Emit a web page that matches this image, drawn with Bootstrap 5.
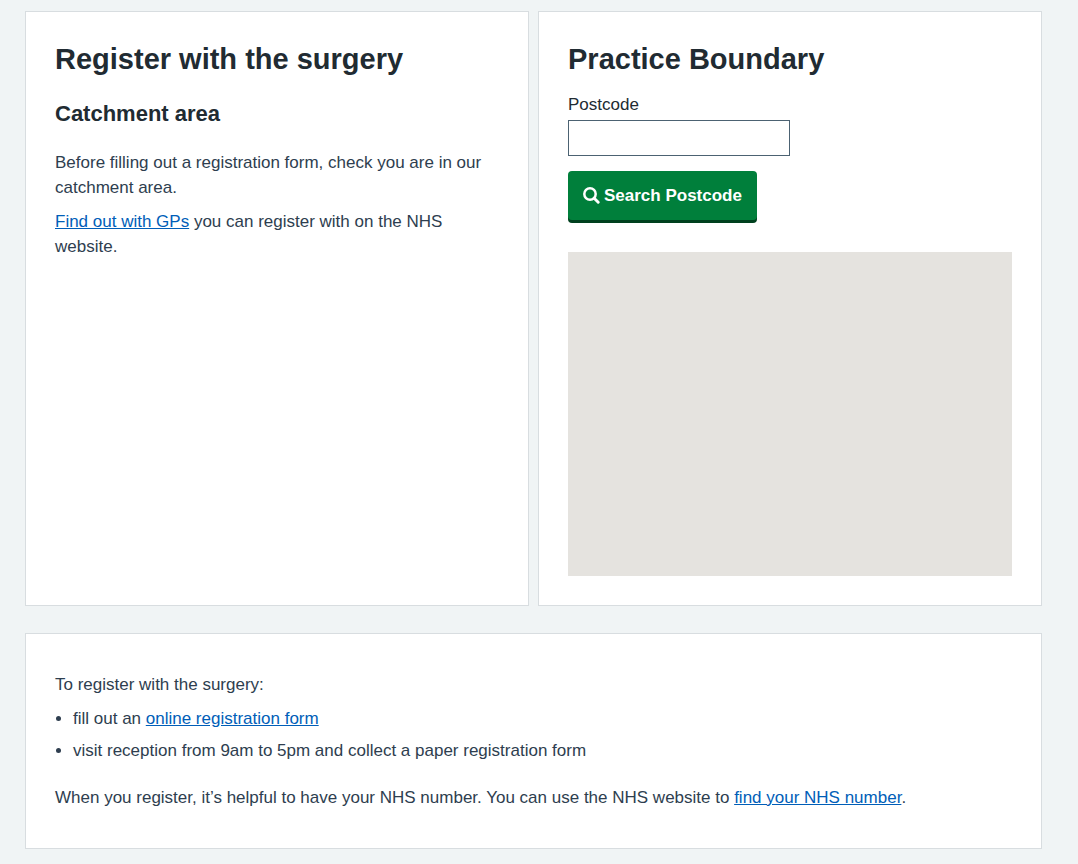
<!DOCTYPE html>
<html lang="en">
<head>
<meta charset="utf-8">
<meta name="viewport" content="width=device-width, initial-scale=1">
<title>Register with the surgery</title>
<link href="https://cdn.jsdelivr.net/npm/bootstrap@5.3.0/dist/css/bootstrap.min.css" rel="stylesheet">
<style>
  body { background: #f0f4f5; color: #212b32; font-family: "Liberation Sans", Arial, sans-serif; font-size: 17px; line-height: 25px; }
  .page { padding: 11px 36px 16px 25px; }
  .panels { gap: 9px; }
  .panel { border: 1px solid #d8dde0; border-radius: 0; color: inherit; }
  .panel .card-body { padding: 29px; }
  h2 { font-size: 29px; line-height: 36px; font-weight: 700; margin-bottom: 15px; }
  h3 { font-size: 22px; line-height: 28px; font-weight: 700; margin: 23px 0 22px; }
  p { margin-bottom: 9px; }
  p, li { color: #2e3e4f; }
  a { color: #005eb8; }
  .postcode-label { margin-bottom: 3px; }
  .postcode { width: 222px; height: 36px; border: 1px solid #4c6272; border-radius: 0; }
  .btn-search { background: #007f3b; color: #fff; font-size: 17px; font-weight: 700; line-height: 25px; border: 0; border-radius: 4px; box-shadow: 0 3px 0 #00401e; padding: 12px 15px; margin: 15px 0 32px; }
  .btn-search:hover { background: #00662f; color: #fff; }
  .map { background: #e5e3df; height: 324px; }
  .intro { margin-top: 9px; }
  .steps { padding-left: 18px; margin-bottom: 22px; }
  .steps li { margin-bottom: 7px; }
  .lower { margin-top: 27px; }
</style>
</head>
<body>
<main class="page">
  <div class="panels d-flex">
    <section class="card panel col">
      <div class="card-body">
        <h2>Register with the surgery</h2>
        <h3>Catchment area</h3>
        <p>Before filling out a registration form, check you are in our catchment area.</p>
        <p class="mb-0"><a href="#">Find out with GPs</a> you can register with on the NHS website.</p>
      </div>
    </section>
    <section class="card panel col">
      <div class="card-body">
        <h2>Practice Boundary</h2>
        <form>
          <label class="postcode-label d-block" for="postcode">Postcode</label>
          <input class="postcode form-control" type="text" id="postcode">
          <button class="btn btn-search d-flex align-items-center gap-1" type="button">
            <svg width="17" height="17" viewBox="0 0 17 17" fill="none" stroke="currentColor" aria-hidden="true"><circle cx="7" cy="7" r="5.700" stroke-width="2.500"/><path d="M11.200 11.200 15.200 15.200" stroke-width="2.900" stroke-linecap="round"/></svg>
            <span>Search Postcode</span>
          </button>
        </form>
        <div class="map" role="img" aria-label="Practice boundary map"></div>
      </div>
    </section>
  </div>
  <section class="card panel lower">
    <div class="card-body">
      <p class="intro">To register with the surgery:</p>
      <ul class="steps">
        <li>fill out an <a href="#">online registration form</a></li>
        <li>visit reception from 9am to 5pm and collect a paper registration form</li>
      </ul>
      <p>When you register, it’s helpful to have your NHS number. You can use the NHS website to <a href="#">find your NHS number</a>.</p>
    </div>
  </section>
</main>
<script src="https://cdn.jsdelivr.net/npm/bootstrap@5.3.0/dist/js/bootstrap.bundle.min.js"></script>
</body>
</html>
